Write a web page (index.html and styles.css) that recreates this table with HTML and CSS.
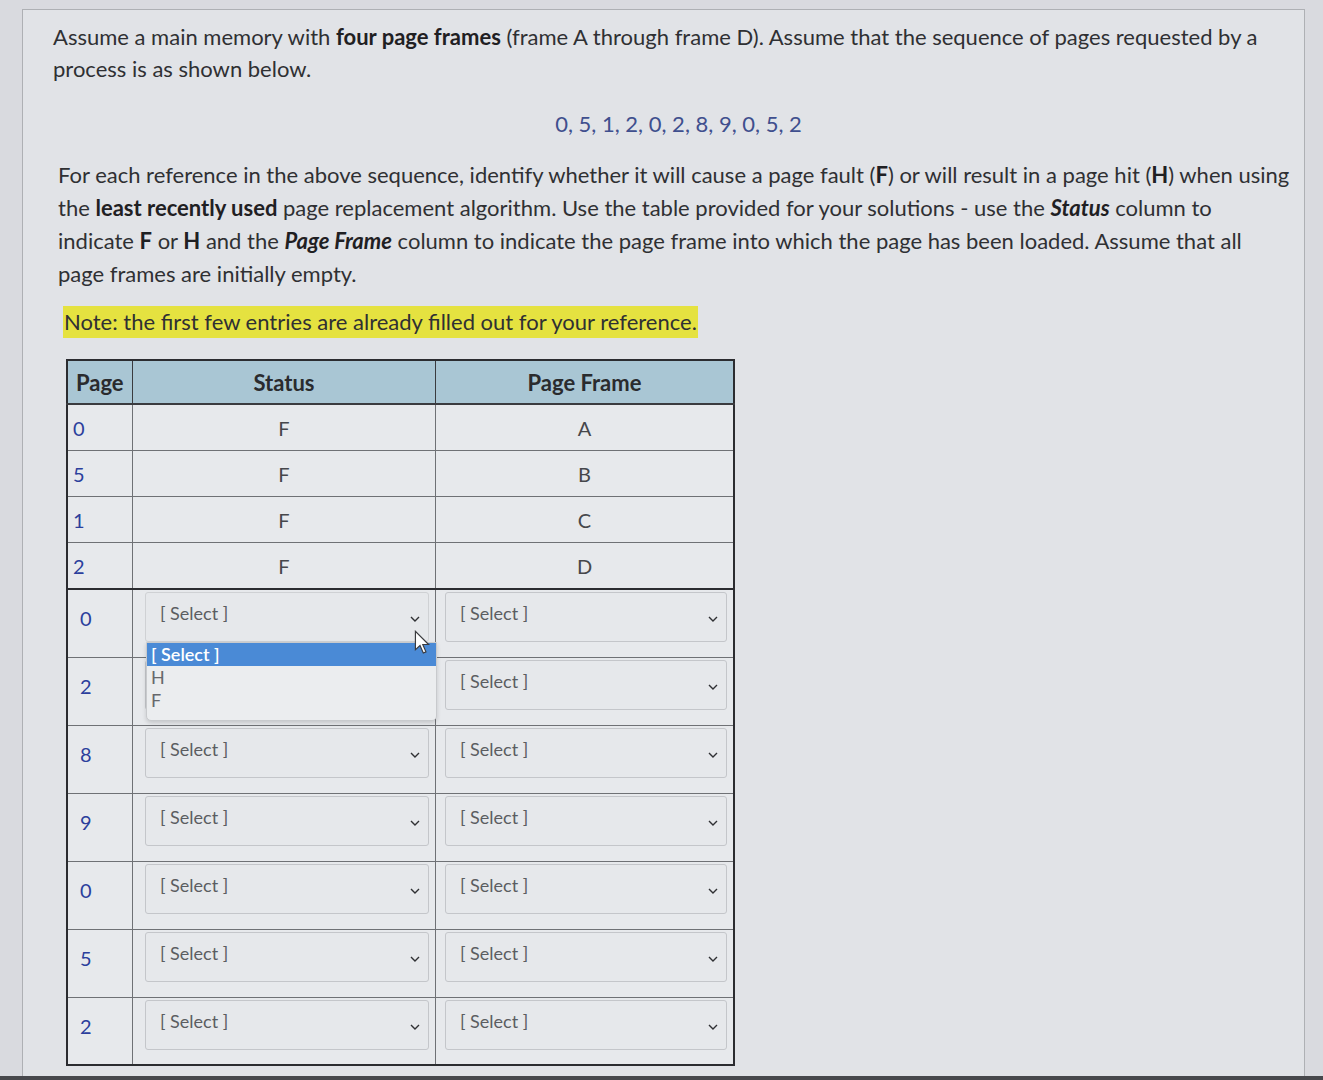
FILE: index.html
```html
<!DOCTYPE html>
<html lang="en">
<head>
<meta charset="utf-8">
<title>LRU page replacement question</title>
<link rel="stylesheet" href="styles.css">
</head>
<body>
<div class="panel">
  <p class="para para-1">Assume a main memory with <strong>four page frames</strong> (frame A through frame D). Assume that the sequence of pages requested by a process is as shown below.</p>
  <p class="sequence">0, 5, 1, 2, 0, 2, 8, 9, 0, 5, 2</p>
  <p class="para para-2">For each reference in the above sequence, identify whether it will cause a page fault (<strong>F</strong>) or will result in a page hit (<strong>H</strong>) when using the <strong>least recently used</strong> page replacement algorithm. Use the table provided for your solutions - use the <strong><em>Status</em></strong> column to<br>indicate <strong>F</strong> or <strong>H</strong> and the <strong><em>Page Frame</em></strong> column to indicate the page frame into which the page has been loaded. Assume that all<br>page frames are initially empty.</p>
  <p class="note"><mark>Note: the first few entries are already filled out for your reference.</mark></p>

  <table class="grid">
    <thead>
      <tr>
        <th class="col-page">Page</th>
        <th class="col-status">Status</th>
        <th class="col-frame">Page Frame</th>
      </tr>
    </thead>
    <tbody>
      <tr class="filled"><td class="pg">0</td><td class="val">F</td><td class="val">A</td></tr>
      <tr class="filled"><td class="pg">5</td><td class="val">F</td><td class="val">B</td></tr>
      <tr class="filled"><td class="pg">1</td><td class="val">F</td><td class="val">C</td></tr>
      <tr class="filled"><td class="pg">2</td><td class="val">F</td><td class="val">D</td></tr>
      <tr class="sel-row">
        <td class="pg">0</td>
        <td class="sel-cell">
          <div class="select open"><span class="sel-text">[ Select ]</span><svg class="chev" viewBox="0 0 10 6" width="10" height="6"><path d="M1 1 L5 5 L9 1" /></svg></div>
          <div class="dropdown">
            <div class="opt active">[ Select ]</div>
            <div class="opt">H</div>
            <div class="opt">F</div>
          </div>
          <svg class="cursor" viewBox="0 0 12 19" width="16" height="25"><path d="M1 1 L1 15 L4.5 11.8 L7 17.5 L9 16.6 L6.6 11 L11 11 Z"/></svg>
        </td>
        <td class="sel-cell"><div class="select"><span class="sel-text">[ Select ]</span><svg class="chev" viewBox="0 0 10 6" width="10" height="6"><path d="M1 1 L5 5 L9 1" /></svg></div></td>
      </tr>
      <tr class="sel-row">
        <td class="pg">2</td>
        <td class="sel-cell"><div class="select"><span class="sel-text">[ Select ]</span><svg class="chev" viewBox="0 0 10 6" width="10" height="6"><path d="M1 1 L5 5 L9 1" /></svg></div></td>
        <td class="sel-cell"><div class="select"><span class="sel-text">[ Select ]</span><svg class="chev" viewBox="0 0 10 6" width="10" height="6"><path d="M1 1 L5 5 L9 1" /></svg></div></td>
      </tr>
      <tr class="sel-row">
        <td class="pg">8</td>
        <td class="sel-cell"><div class="select"><span class="sel-text">[ Select ]</span><svg class="chev" viewBox="0 0 10 6" width="10" height="6"><path d="M1 1 L5 5 L9 1" /></svg></div></td>
        <td class="sel-cell"><div class="select"><span class="sel-text">[ Select ]</span><svg class="chev" viewBox="0 0 10 6" width="10" height="6"><path d="M1 1 L5 5 L9 1" /></svg></div></td>
      </tr>
      <tr class="sel-row">
        <td class="pg">9</td>
        <td class="sel-cell"><div class="select"><span class="sel-text">[ Select ]</span><svg class="chev" viewBox="0 0 10 6" width="10" height="6"><path d="M1 1 L5 5 L9 1" /></svg></div></td>
        <td class="sel-cell"><div class="select"><span class="sel-text">[ Select ]</span><svg class="chev" viewBox="0 0 10 6" width="10" height="6"><path d="M1 1 L5 5 L9 1" /></svg></div></td>
      </tr>
      <tr class="sel-row">
        <td class="pg">0</td>
        <td class="sel-cell"><div class="select"><span class="sel-text">[ Select ]</span><svg class="chev" viewBox="0 0 10 6" width="10" height="6"><path d="M1 1 L5 5 L9 1" /></svg></div></td>
        <td class="sel-cell"><div class="select"><span class="sel-text">[ Select ]</span><svg class="chev" viewBox="0 0 10 6" width="10" height="6"><path d="M1 1 L5 5 L9 1" /></svg></div></td>
      </tr>
      <tr class="sel-row">
        <td class="pg">5</td>
        <td class="sel-cell"><div class="select"><span class="sel-text">[ Select ]</span><svg class="chev" viewBox="0 0 10 6" width="10" height="6"><path d="M1 1 L5 5 L9 1" /></svg></div></td>
        <td class="sel-cell"><div class="select"><span class="sel-text">[ Select ]</span><svg class="chev" viewBox="0 0 10 6" width="10" height="6"><path d="M1 1 L5 5 L9 1" /></svg></div></td>
      </tr>
      <tr class="sel-row">
        <td class="pg">2</td>
        <td class="sel-cell"><div class="select"><span class="sel-text">[ Select ]</span><svg class="chev" viewBox="0 0 10 6" width="10" height="6"><path d="M1 1 L5 5 L9 1" /></svg></div></td>
        <td class="sel-cell"><div class="select"><span class="sel-text">[ Select ]</span><svg class="chev" viewBox="0 0 10 6" width="10" height="6"><path d="M1 1 L5 5 L9 1" /></svg></div></td>
      </tr>
    </tbody>
  </table>
</div>
<div class="bezel"></div>
</body>
</html>
```
FILE: styles.css
```css
html, body {
  margin: 0;
  padding: 0;
}
body {
  background: #d9dadf;
  font-family: Lato, "Open Sans", Arial, sans-serif;
  color: #2f3033;
  width: 1323px;
  height: 1080px;
  overflow: hidden;
}
.panel {
  box-sizing: border-box;
  margin: 9px 18px 0 22px;
  height: 1067px;
  background: #e1e3e7;
  border: 1px solid #aeb0b4;
  border-bottom: none;
  padding: 11px 10px 0 30px;
  overflow: hidden;
}
.para {
  margin: 0;
  font-size: 22px;
  line-height: 32px;
}
.para strong {
  color: #1f2023;
}
.para-1 {
  width: 1215px;
}
.sequence {
  margin: 23px 0 0 0;
  text-align: center;
  font-size: 22px;
  line-height: 32px;
  color: #3f4f8e;
  padding-left: 10px;
}
.para-2 {
  margin-top: 18px;
  padding-left: 5px;
  width: 1240px;
  line-height: 33px;
}
.note {
  margin: 17px 0 0 10px;
  font-size: 22px;
  line-height: 30px;
}
.note mark {
  background: #e5e240;
  color: #2f3033;
  padding: 2px 1px 3px;
}
.grid {
  margin: 22px 0 0 13px;
  border-collapse: collapse;
  width: 669px;
  border: 2px solid #2b2c30;
  font-size: 20px;
}
.grid th {
  background: #a9c6d4;
  height: 42px;
  font-weight: 700;
  font-size: 22px;
  color: #2a2b2e;
  border: 1px solid #3a3b3f;
  border-bottom: 2px solid #3a3b3f;
  padding: 0;
}
.grid .col-page {
  width: 56px;
  text-align: left;
  padding-left: 8px;
}
.col-status {
  width: 302px;
}
.grid td {
  background: #e7e9ec;
  border: 1px solid #6f7175;
  padding: 0;
}
.filled td {
  height: 45px;
}
.filled:nth-child(4) td {
  border-bottom: 2px solid #2b2c30;
}
.grid .pg {
  color: #2c3f9c;
  padding-left: 5px;
  font-size: 20px;
  vertical-align: middle;
}
.sel-row {
  height: 68px;
}
.grid .sel-row .pg {
  padding: 0 0 10px 12px;
}
.val {
  text-align: center;
  color: #46474b;
  font-size: 20px;
}
.grid .sel-cell {
  vertical-align: top;
  position: relative;
  padding: 2px 6px 0 12px;
}
.grid .sel-cell + .sel-cell {
  padding-left: 9px;
}
.select {
  box-sizing: border-box;
  height: 50px;
  border: 1px solid #c4c6ca;
  border-radius: 3px;
  background: #e6e8eb;
  display: flex;
  align-items: center;
  justify-content: space-between;
  padding: 0 8px 8px 14px;
  color: #5b5d61;
  font-size: 18px;
}
.select.open {
  border-color: #cfd1d4;
}
.chev {
  fill: none;
  stroke: #2f3033;
  stroke-width: 1.4;
  margin-top: 12px;
}
.dropdown {
  position: absolute;
  left: 13px;
  top: 52px;
  width: 289px;
  background: #ebedef;
  border: 1px solid #c8cacd;
  border-radius: 0 0 5px 5px;
  box-shadow: 0 2px 4px rgba(0,0,0,0.15);
  padding-bottom: 8px;
  z-index: 2;
  font-size: 18px;
  color: #66686c;
}
.opt {
  height: 23px;
  line-height: 23px;
  padding-left: 4px;
}
.opt.active {
  background: #4a8ad6;
  color: #ffffff;
  font-weight: 600;
}
.cursor {
  position: absolute;
  left: 281px;
  top: 40px;
  fill: #ffffff;
  stroke: #3a3b3f;
  stroke-width: 0.9;
  z-index: 3;
}
.bezel {
  height: 4px;
  background: #47484c;
}
```
